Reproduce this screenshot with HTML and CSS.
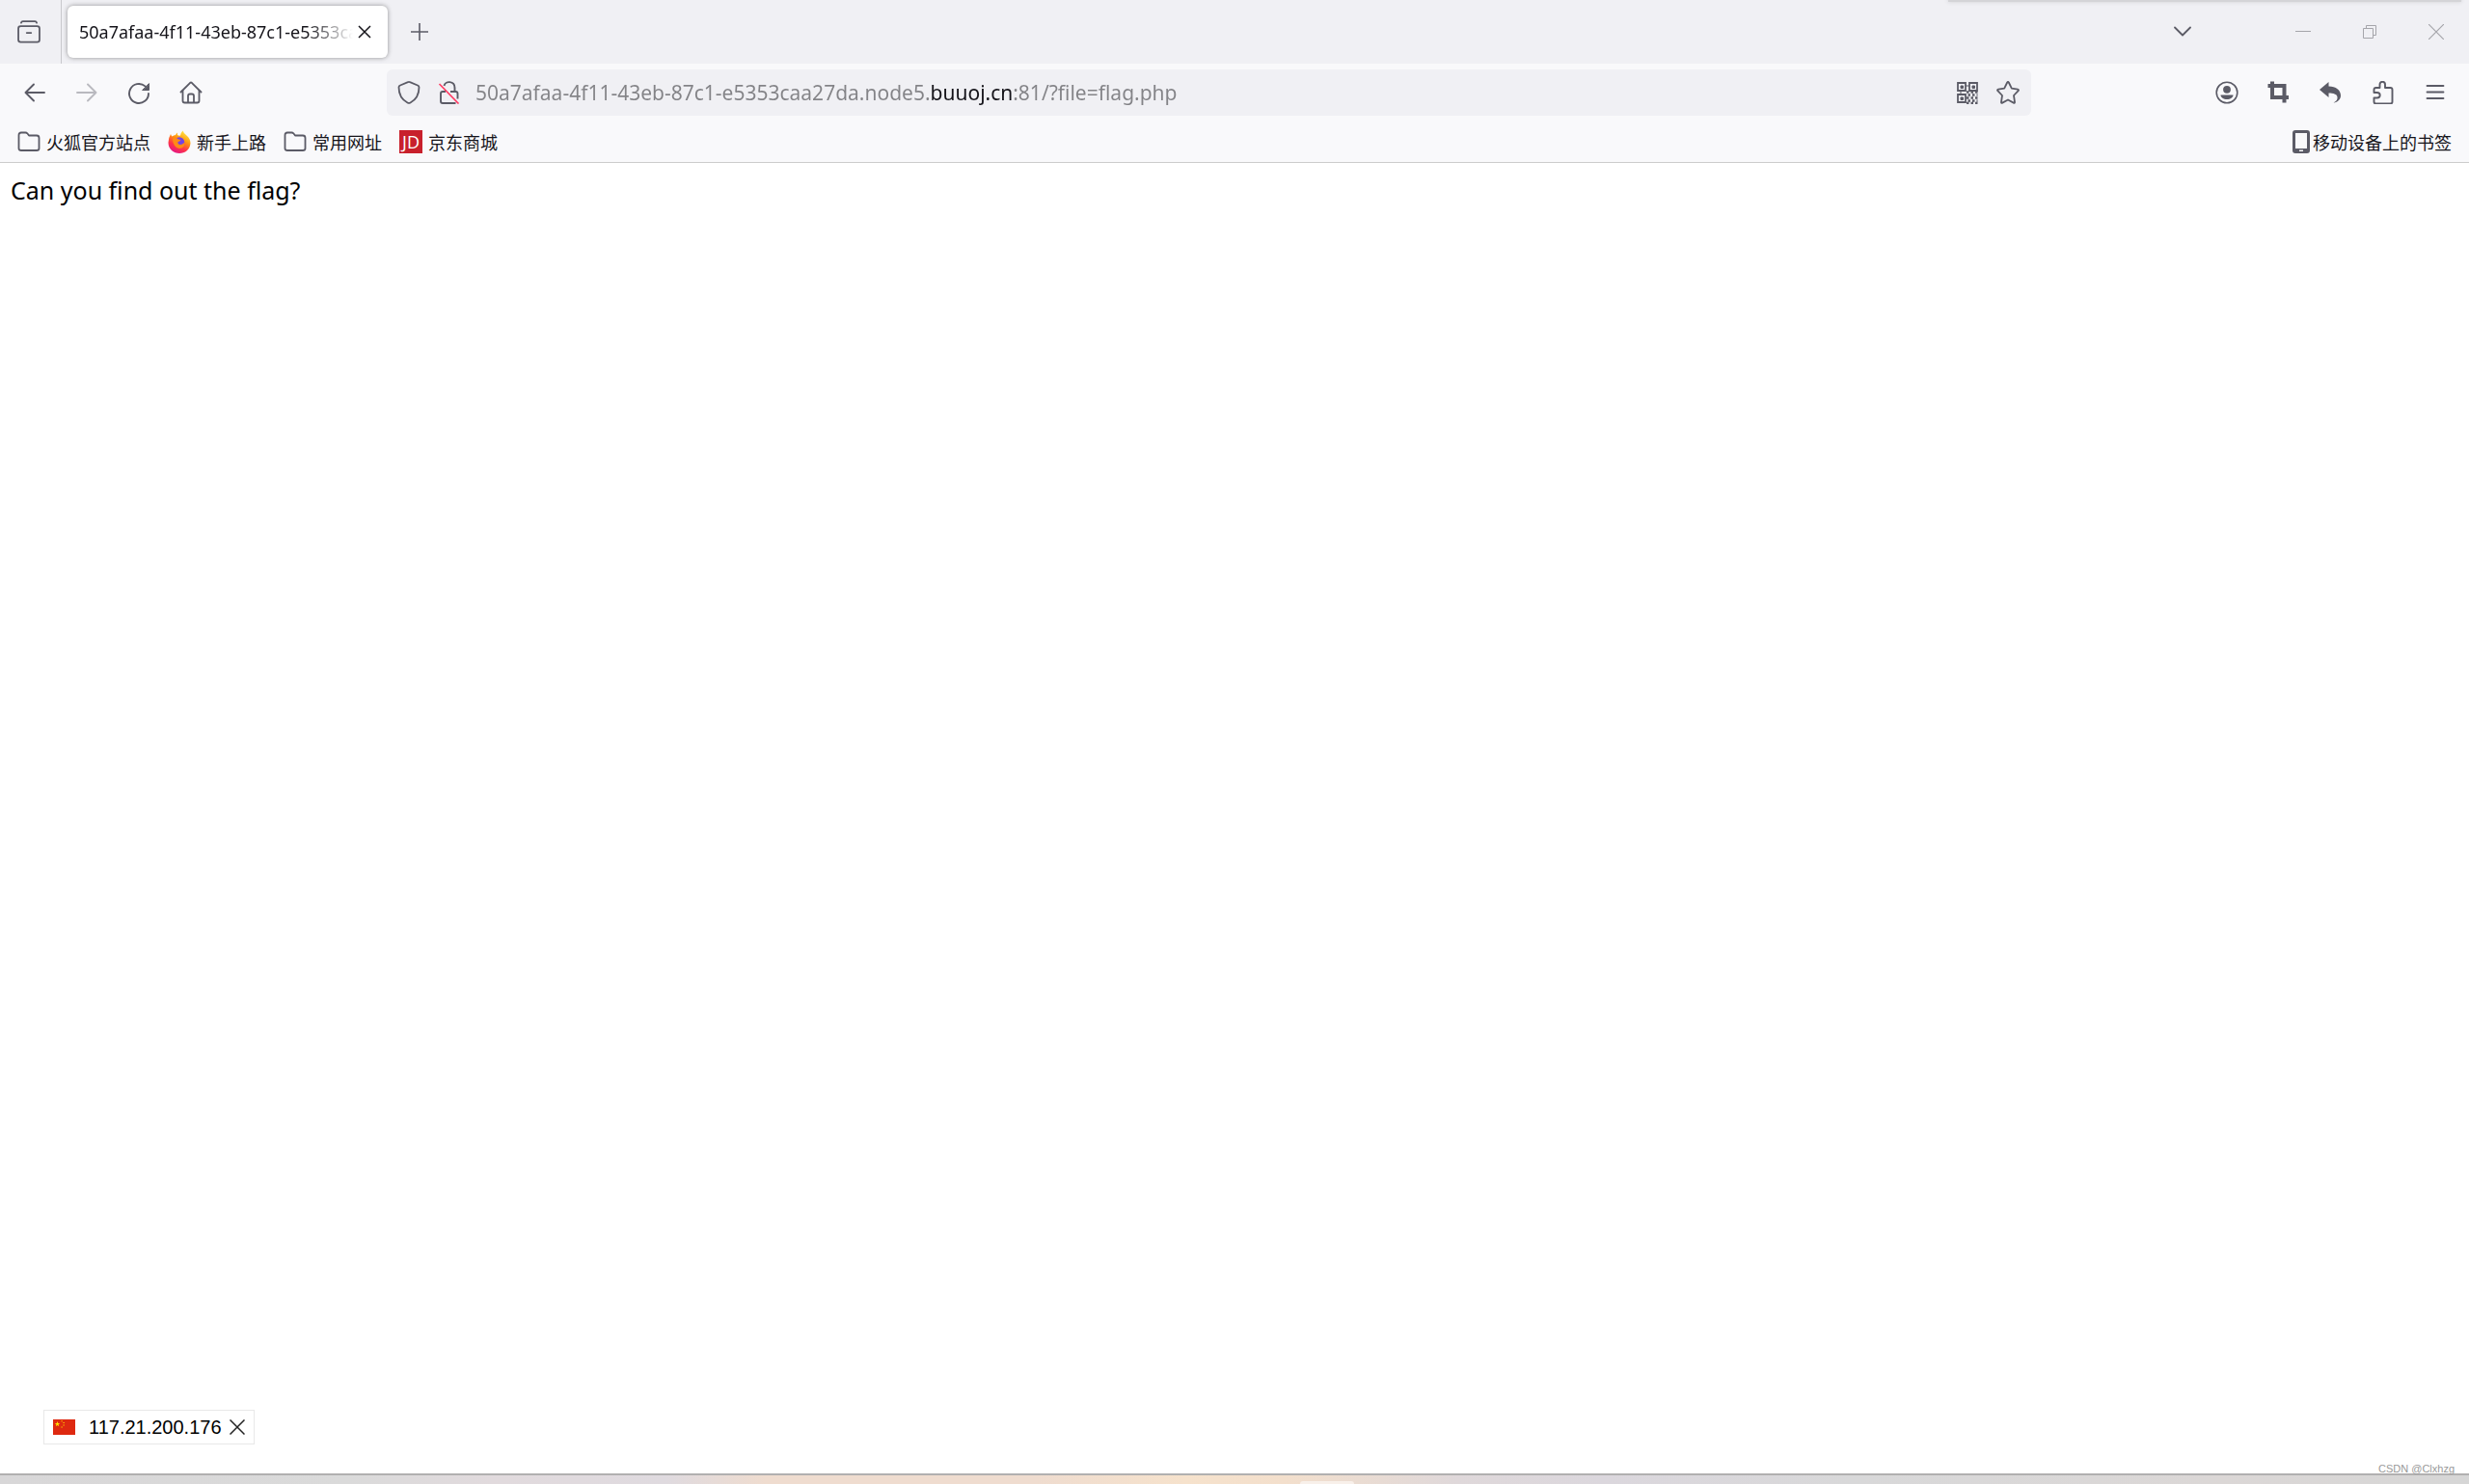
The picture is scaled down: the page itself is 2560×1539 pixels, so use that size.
FILE: index.html
```html
<!DOCTYPE html>
<html lang="zh-CN">
<head>
  <meta charset="utf-8">
  <title>50a7afaa-4f11-43eb-87c1-e5353caa27da.node5.buuoj.cn:81/?file=flag.php</title>
  <link rel="stylesheet" href="styles.css">
</head>
<body>
  <header class="browser">
    <div class="tab-bar">
      <button class="icon-btn view-btn" aria-label="Firefox View">
        <svg width="24" height="24" viewBox="0 0 16 16" fill="none" stroke="currentColor" stroke-width="1.2" stroke-linecap="round">
          <path d="M2.6 1.8c.2-.8.7-1.1 1.3-1.1h8.2c.6 0 1.1.3 1.3 1.1"></path>
          <rect x=".7" y="4.1" width="14.6" height="11" rx="1.6"></rect>
          <path d="M6.5 8.7h3"></path>
        </svg>
      </button>
      <div class="tab">
        <span class="tab-title">50a7afaa-4f11-43eb-87c1-e5353caa27da.node5.buuoj.cn:81/</span>
        <button class="tab-close" aria-label="Close tab">
          <svg width="14" height="14" viewBox="0 0 14 14" fill="none" stroke="currentColor" stroke-width="1.5">
            <path d="M1 1l12 12M13 1L1 13"></path>
          </svg>
        </button>
      </div>
      <button class="icon-btn new-tab" aria-label="New tab">
        <svg width="18" height="18" viewBox="0 0 18 18" fill="none" stroke="currentColor" stroke-width="1.6">
          <path d="M9 0v18M0 9h18"></path>
        </svg>
      </button>
      <button class="icon-btn all-tabs" aria-label="List all tabs">
        <svg width="18" height="12" viewBox="0 0 18 12" fill="none" stroke="currentColor" stroke-width="1.8" stroke-linecap="round" stroke-linejoin="round">
          <path d="M1 1.5l8 8 8-8"></path>
        </svg>
      </button>
      <button class="window-btn" aria-label="Minimize">
        <svg width="16" height="16" viewBox="0 0 16 16" fill="none" stroke="currentColor"><path d="M0 7.5h16"></path></svg>
      </button>
      <button class="window-btn" aria-label="Restore">
        <svg width="16" height="16" viewBox="0 0 16 16" fill="none" stroke="currentColor">
          <path d="M1.5 4.5h10v10h-10zM4.500 4.500v-3h10v10h-3"></path>
        </svg>
      </button>
      <button class="window-btn" aria-label="Close">
        <svg width="16" height="16" viewBox="0 0 16 16" fill="none" stroke="currentColor" stroke-width="1.2"><path d="M0 0l16 16M16 0L0 16"></path></svg>
      </button>
      <div class="window-shadow"></div>
    </div>

    <div class="nav-bar">
      <button class="icon-btn" aria-label="Back">
        <svg width="24" height="24" viewBox="0 0 24 24" fill="none" stroke="currentColor" stroke-width="1.9" stroke-linecap="round" stroke-linejoin="round">
          <path d="M22 12H2.500M11 3.500L2.500 12l8.500 8.500"></path>
        </svg>
      </button>
      <button class="icon-btn" aria-label="Forward" disabled>
        <svg width="24" height="24" viewBox="0 0 24 24" fill="none" stroke="currentColor" stroke-width="1.9" stroke-linecap="round" stroke-linejoin="round">
          <path d="M2 12h19.500M13 3.500l8.500 8.500-8.500 8.500"></path>
        </svg>
      </button>
      <button class="icon-btn" aria-label="Reload">
        <svg width="24" height="24" viewBox="0 0 24 24" fill="none" stroke="currentColor" stroke-width="1.9" stroke-linecap="round">
          <path d="M22 13a10 10 0 1 1-3.500-7.600"></path>
          <path d="M22.500 3v6.500h-6.500z" fill="currentColor" stroke-width="1" stroke-linejoin="round"></path>
        </svg>
      </button>
      <button class="icon-btn" aria-label="Home">
        <svg width="24" height="24" viewBox="0 0 24 24" fill="none" stroke="currentColor" stroke-width="1.8" stroke-linecap="round" stroke-linejoin="round">
          <path d="M1.500 11.500L11.200 1.800q.8-.7 1.600 0l9.700 9.700"></path>
          <path d="M3.500 10v10.500q0 2 2 2h13q2 0 2-2V10"></path>
          <path d="M9 22v-6.500q0-2 2-2h2q2 0 2 2V22"></path>
        </svg>
      </button>

      <div class="url-bar">
        <button class="url-btn" aria-label="Tracking protection">
          <svg width="24" height="24" viewBox="0 0 24 24" fill="none" stroke="currentColor" stroke-width="1.8" stroke-linejoin="round">
            <path d="M11 1.200q1-.5 2 0l8 3.300q1.500.6 1.500 2c0 8-3.500 13-9 16q-1.500.8-3 0c-5.500-3-9-8-9-16q0-1.400 1.500-2z"></path>
          </svg>
        </button>
        <button class="url-btn" aria-label="Connection not secure">
          <svg width="24" height="24" viewBox="0 0 24 24" fill="none" stroke="currentColor" stroke-width="1.9">
            <path d="M6.500 5C7.500-.5 17.500-.5 17.500 7v4"></path>
            <path d="M8 11H5q-2 0-2 2v8q0 2 2 2h13.500M13 11h5.500q2 0 2 2v5.500"></path>
            <path d="M1.500 3l20 20.500" stroke="#ff3b63" stroke-width="1.7"></path>
          </svg>
        </button>
        <input class="url-input" type="text" aria-label="Address" spellcheck="false" value="50a7afaa-4f11-43eb-87c1-e5353caa27da.node5.buuoj.cn:81/?file=flag.php">
        <button class="url-btn" aria-label="QR code">
          <svg width="24" height="24" viewBox="0 0 24 24" fill="none" stroke="currentColor" stroke-width="1.8">
            <path d="M2 2h8v8H2zM14 2h8v8h-8zM2 14h8v8H2z"></path>
            <path d="M5 5h2.500v2.500H5zM17 5h2.500v2.500H17zM5 17h2.500v2.500H5zM10 5h4M5 10v4" fill="currentColor" stroke-width="1"></path>
            <path d="M11 11.500h12M12.500 14.500h10M11 17.500h12M12.500 20.500h10M11 23h12" stroke-width="2.5" stroke-dasharray="2.5 2"></path>
          </svg>
        </button>
        <button class="url-btn" aria-label="Bookmark this page">
          <svg width="24" height="24" viewBox="0 0 24 24" fill="none" stroke="currentColor" stroke-width="1.8" stroke-linejoin="round">
            <path d="M11.200 1.500q.8-1.400 1.600 0l3 6.200 6.300 1q1.400.3.500 1.500l-4.600 4.800 1 6.800q.1 1.400-1.200.8L12 19.500l-5.800 3.100q-1.300.6-1.200-.8l1-6.800-4.600-4.800q-.9-1.200.5-1.500l6.300-1z"></path>
          </svg>
        </button>
      </div>

      <button class="icon-btn" aria-label="Account">
        <svg width="24" height="24" viewBox="0 0 24 24" fill="currentColor">
          <circle cx="12" cy="12" r="10.800" fill="none" stroke="currentColor" stroke-width="1.6"></circle>
          <circle cx="12" cy="8.800" r="3.900"></circle>
          <path d="M5.500 14.500h13c0 2.500-3 4.500-6.500 4.500s-6.500-2-6.500-4.500z"></path>
        </svg>
      </button>
      <button class="icon-btn" aria-label="Screenshot">
        <svg width="24" height="24" viewBox="0 0 24 24" fill="none" stroke="currentColor" stroke-width="4">
          <path d="M.5 5h17v17.500M5 .500v16.500h17"></path>
        </svg>
      </button>
      <button class="icon-btn" aria-label="Undo close tab">
        <svg width="24" height="24" viewBox="0 0 24 24" fill="currentColor">
          <path d="M0 9L9.500 1v4.500C17 5.500 22 9.500 22 15c0 4-3 7-7.500 7.500 3-1.500 4.500-3.500 4-6-.6-3-4-4-9-4V17z"></path>
        </svg>
      </button>
      <button class="icon-btn" aria-label="Extensions">
        <svg width="24" height="24" viewBox="0 0 24 24" fill="none" stroke="currentColor" stroke-width="1.9" stroke-linejoin="round">
          <path d="M8.500 7V3.800c0-4 5.500-4 5.500 0V7h5.500q2 0 2 2v12.500q0 2-2 2h-15q-2 0-2-2v-4h3.200c4 0 4-5.500 0-5.500H2.500V9q0-2 2-2z"></path>
        </svg>
      </button>
      <button class="icon-btn" aria-label="Open application menu">
        <svg width="20" height="18" viewBox="0 0 20 18" fill="none" stroke="currentColor" stroke-width="1.8" stroke-linecap="round">
          <path d="M1.500 2h17M1.500 8.500h17M1.500 15h17"></path>
        </svg>
      </button>
    </div>

    <nav class="bookmarks">
      <a class="bookmark" href="#">
        <svg width="24" height="24" viewBox="0 0 24 24" fill="none" stroke="#5b5b66" stroke-width="1.8" stroke-linejoin="round"><path d="M1.500 19V5q0-2.500 2.500-2.500h4.500q1 0 1.800.8L12 5.500h8q2.500 0 2.500 2.500v11q0 2-2.500 2H4q-2.500 0-2.500-2z"></path></svg>
        火狐官方站点
      </a>
      <a class="bookmark" href="#">
        <svg width="24" height="24" viewBox="0 0 24 24">
          <defs>
            <linearGradient id="fox" x1=".8" y1="0" x2=".3" y2="1">
              <stop offset="0" stop-color="#fff44f"></stop>
              <stop offset=".4" stop-color="#ff980e"></stop>
              <stop offset=".7" stop-color="#ff3647"></stop>
              <stop offset="1" stop-color="#e31587"></stop>
            </linearGradient>
          </defs>
          <path d="M3 4q.5 1.500 1.500 2.500Q6 5 8 5q.5-1.500 2-2.500v2.500q1.500 1 3 .500Q13.500 2.500 15.500.500q1 3 4 5Q23.500 9 23.500 13.500C23 20 18 24 12 24S.500 19.500.500 13Q.500 8 3 4z" fill="url(#fox)"></path>
          <circle cx="12" cy="12.500" r="5.200" fill="#7543e3"></circle>
          <path d="M5 9q3-2.500 6 .500l2.500.500q-1 2-3 2-.500 2.500 2 3 3 .200 4-2 2 3-2 5.500-5 1.500-7.500-2.500Q5 13 5 9z" fill="#ff8a16"></path>
        </svg>
        新手上路
      </a>
      <a class="bookmark" href="#">
        <svg width="24" height="24" viewBox="0 0 24 24" fill="none" stroke="#5b5b66" stroke-width="1.8" stroke-linejoin="round"><path d="M1.500 19V5q0-2.500 2.500-2.500h4.500q1 0 1.800.8L12 5.500h8q2.500 0 2.500 2.500v11q0 2-2.500 2H4q-2.500 0-2.500-2z"></path></svg>
        常用网址
      </a>
      <a class="bookmark" href="#">
        <span class="jd-logo">JD</span>
        京东商城
      </a>
      <a class="bookmark mobile" href="#">
        <svg width="18" height="24" viewBox="0 0 18 24">
          <path fill="#5b5b66" fill-rule="evenodd" d="M3 0h12q3 0 3 3v18q0 3-3 3H3q-3 0-3-3V3q0-3 3-3zm0 3v16h12V3zM7 20.500v1.500h4v-1.500z"></path>
        </svg>
        移动设备上的书签
      </a>
    </nav>
  </header>

  <main class="page">
    <p>Can you find out the flag?</p>
  </main>

  <div class="ip-box">
    <svg width="23" height="16" viewBox="0 0 23 16">
      <rect width="23" height="16" fill="#de2910"></rect>
      <path fill="#ffde00" d="M4.500 2l.7 2h2L5.600 5.200l.6 2-1.700-1.200-1.700 1.200.6-2L1.800 4h2z"></path>
      <path fill="#ffde00" d="M8.500 1.200h1.200v1H8.500zM10.500 3h1.200v1h-1.200zM10.500 5.500h1.200v1h-1.200zM8.500 7.500h1.200v1H8.500z"></path>
    </svg>
    <span class="ip-text">117.21.200.176</span>
    <button class="ip-close" aria-label="Close">
      <svg width="16" height="16" viewBox="0 0 16 16" fill="none" stroke="currentColor" stroke-width="1.5"><path d="M.5.5l15 15M15.500.500l-15 15"></path></svg>
    </button>
  </div>

  <footer class="taskbar"><span class="taskbar-item"></span></footer>
  <div class="watermark">CSDN @Clxhzg</div>
</body>
</html>
```

FILE: styles.css
```css
* {
  margin: 0;
  padding: 0;
  box-sizing: border-box;
}

body {
  font-family: 'Noto Sans', 'Noto Sans CJK SC', sans-serif;
  background: #fff;
  color: #15141a;
  min-height: 100vh;
  display: flex;
  flex-direction: column;
  position: relative;
}

button {
  border: none;
  background: none;
  color: #5b5b66;
  display: flex;
  align-items: center;
  justify-content: center;
  flex-shrink: 0;
}

button:disabled {
  opacity: 0.4;
}

.browser {
  background: #f9f9fb;
  border-bottom: 1px solid #ccc;
}

/* tabs */
.tab-bar {
  height: 66px;
  background: #f0f0f4;
  display: flex;
  align-items: stretch;
  position: relative;
}

.icon-btn {
  width: 54px;
}

.view-btn {
  width: 64px;
  padding-right: 4px;
  border-right: 1px solid #c8c8cc;
}

.tab {
  width: 332px;
  margin: 6px;
  padding: 0 12px;
  background: #fff;
  border-radius: 6px;
  box-shadow: 0 0 5px rgba(0,0,0,0.4);
  display: flex;
  align-items: center;
}

.tab-title {
  flex: 1;
  overflow: hidden;
  white-space: nowrap;
  font-size: 18px;
  line-height: 24px;
  mask-image: linear-gradient(to left, transparent, #000 48px);
}

.tab-close {
  width: 24px;
  height: 24px;
  color: #15141a;
}

.new-tab {
  margin-right: auto;
}

.all-tabs {
  margin-right: 63px;
}

.window-btn {
  width: 69px;
  color: #a5a5aa;
}

.window-shadow {
  position: absolute;
  top: -6px;
  right: 8px;
  width: 532px;
  height: 8px;
  background: #d4d4d7;
  box-shadow: 0 0 4px #d0d0d4;
}

/* navigation */
.nav-bar {
  height: 60px;
  padding: 0 8px 0 9px;
  display: flex;
  align-items: center;
}

.url-bar {
  flex: 1;
  height: 48px;
  margin: 0 176px;
  padding: 0 3px 0 2px;
  background: #f0f0f4;
  border-radius: 6px;
  display: flex;
  align-items: center;
}

.url-btn {
  width: 42px;
}

/* the host name is drawn darker than the rest of the address */
.url-input {
  flex: 1;
  min-width: 0;
  height: 36px;
  margin-left: 6px;
  border: none;
  outline: none;
  font-family: inherit;
  font-size: 21px;
  color: transparent;
  background: linear-gradient(to right, #838387 472px, #15141a 472px, #15141a 557px, #838387 557px);
  background-clip: text;
}

/* bookmarks */
.bookmarks {
  height: 42px;
  padding: 0 18px;
  display: flex;
  align-items: center;
  gap: 18px;
}

.bookmark {
  display: flex;
  align-items: center;
  gap: 6px;
  color: #15141a;
  text-decoration: none;
  font-family: 'Noto Sans CJK SC', sans-serif;
  font-size: 18px;
  line-height: 24px;
}

.bookmark.mobile {
  margin-left: auto;
  gap: 3px;
}

.jd-logo {
  width: 24px;
  height: 24px;
  background: #c8202c;
  color: #fff;
  font-family: 'Open Sans', sans-serif;
  font-size: 18px;
  text-align: center;
}

/* page */
.page {
  flex: 1;
  padding: 12px 11px;
  color: #000;
  font-size: 25px;
  line-height: 32px;
}

.ip-box {
  position: absolute;
  left: 45px;
  bottom: 41px;
  height: 36px;
  padding: 0 9px;
  border: 1px solid #e8e8e8;
  background: #fff;
  display: flex;
  align-items: center;
}

.ip-text {
  margin: 0 8px 0 14px;
  color: #000;
  font-family: 'Liberation Sans', Arial, sans-serif;
  font-size: 20px;
}

.ip-close {
  color: #222;
}

.taskbar {
  height: 11px;
  border-top: 2px solid #b1b0b0;
  background: linear-gradient(to right, #d8d7d8, #dadada 14%, #e1dadd 20%, #dfdadf 27%, #efdccf 31%, #efdccf 42%, #f6e2cc 48%, #f3dfcc 52%, #dfd8da 59%, #dbd7dd 65%, #d8d8d9 75%, #dbd7d6 90%, #d6d6d6);
  display: flex;
  align-items: flex-end;
}

.taskbar-item {
  width: 56px;
  height: 3px;
  margin-left: 1348px;
  border-radius: 4px 4px 0 0;
  background: #f8f0ea;
}

.watermark {
  position: absolute;
  right: 15px;
  bottom: 8px;
  color: #999;
  font-family: 'Liberation Sans', Arial, sans-serif;
  font-size: 11px;
  line-height: 16px;
}
```
